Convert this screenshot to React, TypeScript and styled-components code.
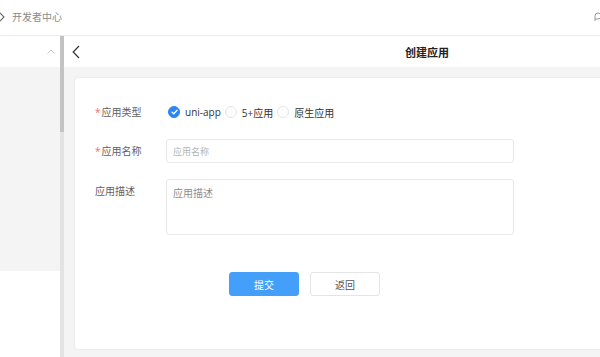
import React from 'react';
import styled, { createGlobalStyle } from 'styled-components';

const Global = createGlobalStyle`
  *, *::before, *::after { box-sizing: border-box; }
  html, body { margin: 0; padding: 0; background: #fff; overflow: hidden; }
  body {
    width: 600px;
    height: 357px;
    font-family: "Open Sans", "Noto Sans CJK SC", sans-serif;
    color: #333;
  }
`;

const Page = styled.div`
  width: 600px;
  height: 357px;
  display: flex;
  flex-direction: column;
  overflow: hidden;
`;

const TopBar = styled.header`
  height: 36px;
  flex: none;
  display: flex;
  align-items: center;
  padding-bottom: 2px;
  border-bottom: 1px solid #ececec;
`;

const Crumb = styled.svg`
  width: 6px;
  height: 16px;
  flex: none;
`;

const SiteTitle = styled.span`
  margin-left: 6px;
  font-size: 10px;
  color: #8a8a8a;
`;

const UserIcon = styled.svg`
  margin-left: auto;
  width: 6px;
  height: 10px;
  flex: none;
`;

const Body = styled.div`
  flex: 1;
  display: flex;
  min-height: 0;
`;

const Sidebar = styled.aside`
  width: 60px;
  flex: none;
  display: flex;
  flex-direction: column;
  background: #fff;
`;

const SideHead = styled.div`
  height: 31px;
  display: flex;
  align-items: center;
  justify-content: flex-end;
  padding-right: 5px;
`;

const SideMenu = styled.div`
  height: 204px;
  background: #f4f4f4;
`;

const ScrollTrack = styled.div`
  width: 4px;
  flex: none;
  background: #e3e3e3;
  display: flex;
  flex-direction: column;
`;

const ScrollThumb = styled.div`
  height: 96px;
  background: #c3c3c3;
`;

const Main = styled.main`
  flex: 1;
  min-width: 0;
  display: flex;
  flex-direction: column;
`;

const MainHead = styled.div`
  height: 31px;
  flex: none;
  display: grid;
  grid-template-columns: 341px auto 1fr;
  align-items: center;
  background: #fff;
`;

const BackButton = styled.button`
  justify-self: start;
  margin-left: 8px;
  padding: 0;
  border: 0;
  background: none;
  display: flex;
  cursor: pointer;
`;

const PageTitle = styled.h1`
  margin: 0;
  font-size: 11px;
  font-weight: 700;
  color: #222;
`;

const Content = styled.div`
  flex: 1;
  background: #f4f4f4;
  padding: 10px 0 7px 10px;
  display: flex;
`;

const Card = styled.section`
  flex: 1;
  background: #fff;
  border: 1px solid #ececec;
  border-right: 0;
  border-radius: 4px 0 0 4px;
  padding: 22px 0 0 20px;
  display: flex;
  flex-direction: column;
`;

const FormRow = styled.div<{ $gap?: number }>`
  display: flex;
  align-items: flex-start;
  margin-top: ${p => p.$gap ?? 0}px;
`;

const Label = styled.label`
  width: 71px;
  flex: none;
  font-size: 10px;
  line-height: 24px;
  color: #5f6166;
`;

const Star = styled.span`
  color: #f56c6c;
  margin-right: 1px;
`;

const RadioGroup = styled.div`
  height: 24px;
  display: flex;
  align-items: center;
  padding-left: 2px;
`;

const RadioOption = styled.span`
  display: flex;
  align-items: center;
  margin-right: 4px;
  font-size: 10px;
  color: #333;
`;

const RadioCircle = styled.span<{ $checked?: boolean }>`
  width: 12px;
  height: 12px;
  border-radius: 50%;
  flex: none;
  margin-right: 5px;
  display: flex;
  align-items: center;
  justify-content: center;
  background: ${p => (p.$checked ? '#2b86f2' : '#fff')};
  border: 1px solid ${p => (p.$checked ? '#2b86f2' : '#e2e4e8')};
`;

const TextInput = styled.input`
  width: 348px;
  height: 24px;
  border: 1px solid #e8e8e8;
  border-radius: 3px;
  padding: 0 6px;
  font-family: inherit;
  font-size: 9px;
  outline: none;
  &::placeholder { color: #b4b4b4; }
`;

const TextArea = styled.textarea`
  width: 348px;
  height: 56px;
  border: 1px solid #e8e8e8;
  border-radius: 3px;
  padding: 6px 6px;
  font-family: inherit;
  font-size: 10px;
  line-height: 14px;
  resize: none;
  outline: none;
  &::placeholder { color: #8e8e8e; }
`;

const ButtonRow = styled.div`
  display: flex;
  gap: 11px;
  margin-top: 37px;
  padding-left: 134px;
`;

const Button = styled.button<{ $primary?: boolean }>`
  width: 70px;
  height: 24px;
  border-radius: 3px;
  font-family: inherit;
  font-size: 10px;
  cursor: pointer;
  background: ${p => (p.$primary ? '#439ffa' : '#fff')};
  color: ${p => (p.$primary ? '#fff' : '#555')};
  border: 1px solid ${p => (p.$primary ? '#439ffa' : '#e4e4e4')};
`;

const Check = () => (
  <svg width="7" height="6" viewBox="0 0 7 6">
    <path d="M1 3.2 L2.8 4.8 L6 1.2" fill="none" stroke="#fff" strokeWidth="1.3" strokeLinecap="round" strokeLinejoin="round" />
  </svg>
);

export default function App() {
  return (
    <>
      <Global />
      <Page>
        <TopBar>
          <Crumb viewBox="4 0 6 16">
            <path d="M2 2 L8 8 L2 14" fill="none" stroke="#666" strokeWidth="1.1" />
          </Crumb>
          <SiteTitle>开发者中心</SiteTitle>
          <UserIcon viewBox="0 0 6 10">
            <path d="M1 9 V4 A3 3 0 0 1 7 4 A3 3 0 0 1 4 7 H1" fill="none" stroke="#999" strokeWidth="1" />
          </UserIcon>
        </TopBar>
        <Body>
          <Sidebar>
            <SideHead>
              <svg width="8" height="5" viewBox="0 0 8 5">
                <path d="M0.5 4.5 L4 1 L7.5 4.5" fill="none" stroke="#c8c8c8" strokeWidth="1" />
              </svg>
            </SideHead>
            <SideMenu />
          </Sidebar>
          <ScrollTrack>
            <ScrollThumb />
          </ScrollTrack>
          <Main>
            <MainHead>
              <BackButton aria-label="返回">
                <svg width="8" height="14" viewBox="0 0 8 14">
                  <path d="M7 1 L1.2 7 L7 13" fill="none" stroke="#333" strokeWidth="1.2" />
                </svg>
              </BackButton>
              <PageTitle>创建应用</PageTitle>
              <span />
            </MainHead>
            <Content>
              <Card>
                <FormRow>
                  <Label><Star>*</Star>应用类型</Label>
                  <RadioGroup>
                    <RadioOption><RadioCircle $checked><Check /></RadioCircle>uni-app</RadioOption>
                    <RadioOption><RadioCircle />5+应用</RadioOption>
                    <RadioOption><RadioCircle />原生应用</RadioOption>
                  </RadioGroup>
                </FormRow>
                <FormRow $gap={15}>
                  <Label><Star>*</Star>应用名称</Label>
                  <TextInput placeholder="应用名称" />
                </FormRow>
                <FormRow $gap={16}>
                  <Label>应用描述</Label>
                  <TextArea placeholder="应用描述" />
                </FormRow>
                <ButtonRow>
                  <Button $primary>提交</Button>
                  <Button>返回</Button>
                </ButtonRow>
              </Card>
            </Content>
          </Main>
        </Body>
      </Page>
    </>
  );
}
